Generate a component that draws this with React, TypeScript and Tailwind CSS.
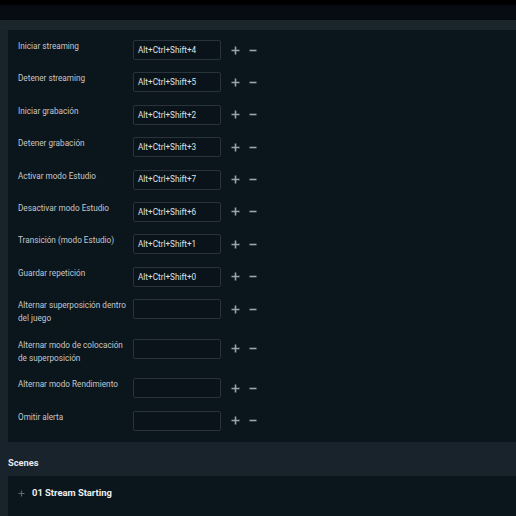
import React from "react";

type Hotkey = { label: string; keys: string; tall?: boolean };

const hotkeys: Hotkey[] = [
  { label: "Iniciar streaming", keys: "Alt+Ctrl+Shift+4" },
  { label: "Detener streaming", keys: "Alt+Ctrl+Shift+5" },
  { label: "Iniciar grabación", keys: "Alt+Ctrl+Shift+2" },
  { label: "Detener grabación", keys: "Alt+Ctrl+Shift+3" },
  { label: "Activar modo Estudio", keys: "Alt+Ctrl+Shift+7" },
  { label: "Desactivar modo Estudio", keys: "Alt+Ctrl+Shift+6" },
  { label: "Transición (modo Estudio)", keys: "Alt+Ctrl+Shift+1" },
  { label: "Guardar repetición", keys: "Alt+Ctrl+Shift+0" },
  { label: "Alternar superposición dentro del juego", keys: "", tall: true },
  { label: "Alternar modo de colocación de superposición", keys: "", tall: true },
  { label: "Alternar modo Rendimiento", keys: "" },
  { label: "Omitir alerta", keys: "" },
];

function PlusIcon() {
  return (
    <svg width="9" height="9" viewBox="0 0 9 9" className="block">
      <path d="M4.5 0.5v8M0.5 4.5h8" stroke="#9ba4ab" strokeWidth="1.6" />
    </svg>
  );
}

function MinusIcon() {
  return (
    <svg width="8" height="9" viewBox="0 0 8 9" className="block">
      <path d="M0.5 4.5h7" stroke="#9ba4ab" strokeWidth="1.6" />
    </svg>
  );
}

function HotkeyRow({ item }: { item: Hotkey }) {
  return (
    <div className={`flex items-start ${item.tall ? "h-[39.5px]" : "h-[32.4px]"}`}>
      <div className="w-[115px] pr-[3px] text-[8.2px] leading-[13px] text-[#c3c8cc]">{item.label}</div>
      <div className="flex items-center">
        <div className="w-[88px] h-[20px] rounded-[2px] border border-[#29333a] bg-[#0a1319] pl-[4px] flex items-center text-[8.2px] text-[#dfe2e5]">
          {item.keys}
        </div>
        <div className="ml-[10px] flex items-center gap-[9px]">
          <PlusIcon />
          <MinusIcon />
        </div>
      </div>
    </div>
  );
}

export default function App() {
  return (
    <div
      className="w-[516px] h-[516px] overflow-hidden flex flex-col bg-[#19232b]"
      style={{ fontFamily: "Roboto, 'Liberation Sans', sans-serif" }}
    >
      <div className="h-[5px] bg-black" />
      <div className="h-[15px] bg-[#070c13]" />
      <div className="h-[10px] bg-[#1b252c]" />
      <div className="ml-[8px] h-[412px] bg-[#0b151c] pl-[10px] pt-[10px]">
        {hotkeys.map((h) => (
          <HotkeyRow key={h.label} item={h} />
        ))}
      </div>
      <div className="h-[34px] px-[8px] flex items-end pb-[6px] text-[9.3px] font-bold text-[#e6e9eb]">
        Scenes
      </div>
      <div className="ml-[8px] flex-1 bg-[#0b151c]">
        <div className="h-[34px] flex items-center pl-[10px]">
          <svg width="7" height="7" viewBox="0 0 7 7" className="block">
            <path d="M3.5 0.5v6M0.5 3.5h6" stroke="#5d676e" strokeWidth="1.2" />
          </svg>
          <span className="ml-[7px] text-[9.4px] font-bold text-[#eef0f2]">01 Stream Starting</span>
        </div>
      </div>
    </div>
  );
}
